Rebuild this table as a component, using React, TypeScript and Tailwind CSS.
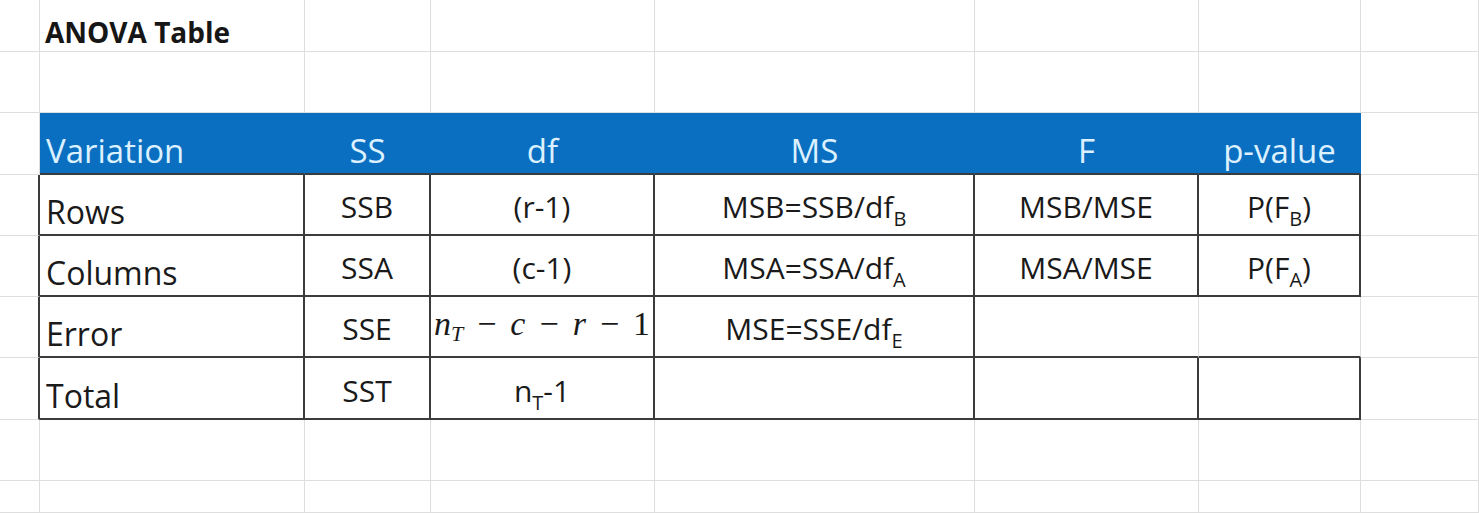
import React from 'react';

type Kind = 'blank' | 'title' | 'headLabel' | 'head' | 'label' | 'value' | 'edge';

interface Cell {
  kind: Kind;
  content?: React.ReactNode;
  border: string;
}

const GRID = 'border-r border-b border-[#dedede]';
const DARK = 'border-r-2 border-b-2 border-[#3b3b3b]';
const HEAD = 'border-r border-b-2 border-r-[#0b6fc1] border-b-[#3b3b3b] bg-[#0b6fc1]';
const EDGE = 'border-r-2 border-b border-r-[#3b3b3b] border-b-[#dedede]';
const OPEN = 'border-r border-b-2 border-r-[#dedede] border-b-[#3b3b3b]';

const Sub = ({ children }: { children: React.ReactNode }) => (
  <sub className="text-[20px] align-[-3px]">{children}</sub>
);

// n_T − c − r − 1, set like an Excel equation object
const MathDf = () => (
  <span className="inline-block mb-[3px] font-['Liberation_Serif','DejaVu_Serif',serif] text-[34px] font-normal italic">
    n<sub className="text-[22px]">T</sub>
    <span className="not-italic mx-[14px]">−</span>c
    <span className="not-italic mx-[14px]">−</span>r
    <span className="not-italic mx-[14px]">−</span>
    <span className="not-italic">1</span>
  </span>
);

const header = ['Variation', 'SS', 'df', 'MS', 'F', 'p-value'];

const body: React.ReactNode[][] = [
  ['Rows', 'SSB', '(r-1)', <>MSB=SSB/df<Sub>B</Sub></>, 'MSB/MSE', <>P(F<Sub>B</Sub>)</>],
  ['Columns', 'SSA', '(c-1)', <>MSA=SSA/df<Sub>A</Sub></>, 'MSA/MSE', <>P(F<Sub>A</Sub>)</>],
  ['Error', 'SSE', <MathDf />, <>MSE=SSE/df<Sub>E</Sub></>, '', ''],
  ['Total', 'SST', <>n<Sub>T</Sub>-1</>, '', '', ''],
];

function buildSheet(): Cell[][] {
  const rows: Cell[][] = [];
  // row 1: title
  rows.push(
    Array.from({ length: 8 }, (_, c) =>
      c === 1
        ? { kind: 'title' as Kind, content: 'ANOVA Table', border: GRID }
        : { kind: 'blank' as Kind, border: GRID }
    )
  );
  // row 2: empty
  rows.push(Array.from({ length: 8 }, () => ({ kind: 'blank' as Kind, border: GRID })));
  // row 3: header band
  rows.push(
    Array.from({ length: 8 }, (_, c) => {
      if (c === 0 || c === 7) return { kind: 'blank' as Kind, border: GRID };
      return { kind: (c === 1 ? 'headLabel' : 'head') as Kind, content: header[c - 1], border: HEAD };
    })
  );
  // table body
  body.forEach((line, r) => {
    rows.push(
      Array.from({ length: 8 }, (_, c) => {
        if (c === 0) return { kind: 'edge' as Kind, border: EDGE };
        if (c === 7) return { kind: 'blank' as Kind, border: GRID };
        // the Error row has no box round its F and p-value cells
        const border = r === 2 && c >= 5 ? OPEN : DARK;
        return { kind: (c === 1 ? 'label' : 'value') as Kind, content: line[c - 1], border };
      })
    );
  });
  // trailing empty rows
  rows.push(Array.from({ length: 8 }, () => ({ kind: 'blank' as Kind, border: GRID })));
  rows.push(Array.from({ length: 8 }, () => ({ kind: 'blank' as Kind, border: GRID })));
  return rows;
}

function SheetCell({ cell }: { cell: Cell }) {
  let inner = '';
  switch (cell.kind) {
    case 'title':
      inner = 'justify-start pl-[5px] pb-[5px] text-[28px] font-bold text-[#161616] whitespace-nowrap';
      break;
    case 'headLabel':
      inner = 'justify-start pl-[6px] pb-[6px] text-[33px] font-medium text-[#dcf1ff]';
      break;
    case 'head':
      inner = 'justify-center pb-[6px] text-[33px] font-medium text-[#dcf1ff]';
      break;
    case 'label':
      inner = 'justify-start pl-[6px] pb-[6px] text-[32px] font-medium text-[#1a1a1a]';
      break;
    case 'value':
      inner = 'justify-center pb-[12px] text-[30px] font-medium text-[#1a1a1a] whitespace-nowrap';
      break;
    default:
      inner = '';
  }
  return (
    <div className={`box-border flex items-end leading-none overflow-visible ${cell.border} ${inner}`}>
      {cell.content ? <span>{cell.content}</span> : null}
    </div>
  );
}

export default function App() {
  const sheet = buildSheet();

  return (
    <div className="w-[1479px] h-[513px] overflow-hidden bg-white font-['Open_Sans','Liberation_Sans',sans-serif]">
      <div className="grid grid-cols-[40px_265px_126px_224px_320px_224px_162px_118px] grid-rows-[52px_61px_62px_61px_61px_61px_62px_61px_32px]">
        {sheet.map((row, r) =>
          row.map((cell, c) => <SheetCell key={`${r}-${c}`} cell={cell} />)
        )}
      </div>
    </div>
  );
}
